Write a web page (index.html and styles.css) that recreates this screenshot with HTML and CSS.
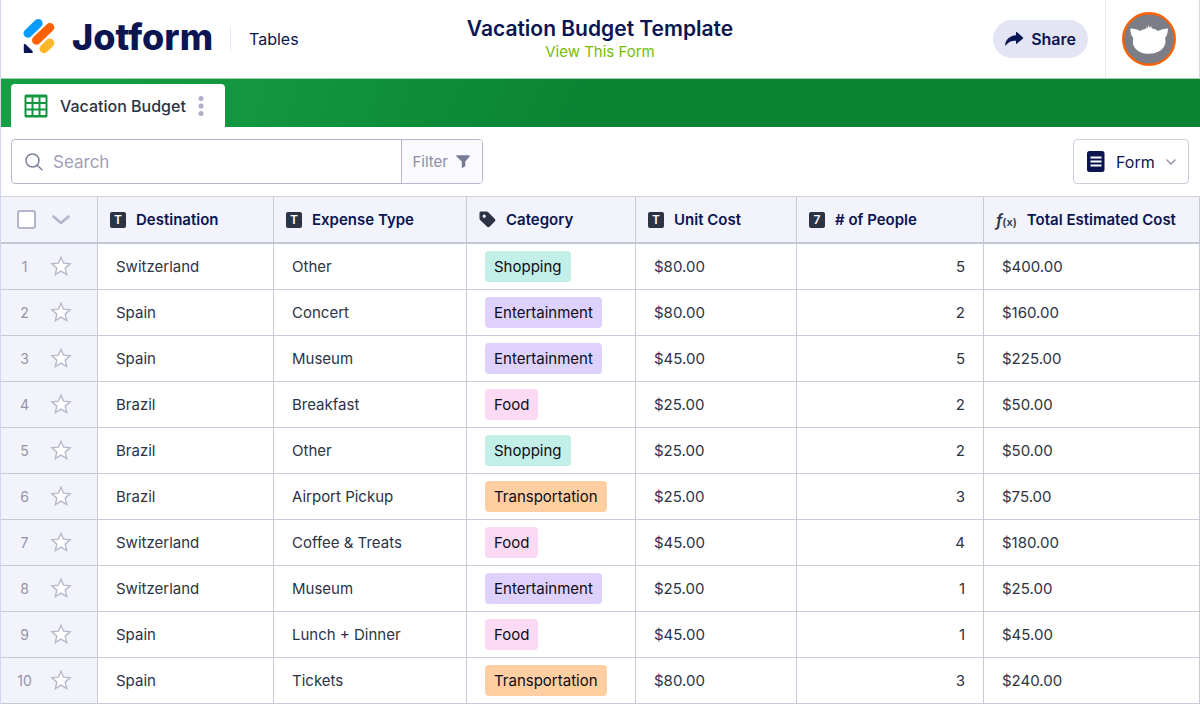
FILE: index.html
```html
<!DOCTYPE html>
<html lang="en">
<head>
    <meta charset="UTF-8">
    <meta name="viewport" content="width=device-width, initial-scale=1.0">
    <title>Vacation Budget Template | Jotform Tables</title>
    <link rel="stylesheet" href="styles.css">
</head>
<body>
<svg class="sprite" aria-hidden="true">
    <symbol id="star" viewBox="0 0 22 22">
        <path d="M11 1.200l2.600 6 6.500.6-4.900 4.300 1.500 6.400L11 15.100l-5.700 3.400 1.500-6.400L1.900 7.800l6.500-.6z" fill="#fff" stroke="#b7b8cb" stroke-width="1.400"/>
    </symbol>
</svg>

<header class="header">
    <div class="brand">
        <a class="logo" href="#">
            <svg width="32" height="36" viewBox="0 0 32 36" aria-hidden="true">
                <g fill="none" stroke-width="8.8" stroke-linecap="round">
                    <path d="M4.900 14.300L15.200 4.400" stroke="#0a9bff"/>
                    <path d="M13.400 21.300L26.900 8.400" stroke="#ff6100"/>
                    <path d="M20.900 29.800L26.900 24" stroke="#ffb629"/>
                </g>
                <path d="M.8 26c0-1 1-1.400 1.700-.7l7 6.800c.8.8.3 1.900-.7 1.900H1.800c-.6 0-1-.4-1-1z" fill="#0a1551"/>
            </svg>
            <span class="logo-text">Jotform</span>
        </a>
        <a class="product" href="#">Tables</a>
    </div>
    <div class="title">
        <h1>Vacation Budget Template</h1>
        <a href="#">View This Form</a>
    </div>
    <div class="account">
        <button class="share" type="button">
            <svg width="19" height="14" viewBox="0 0 19 14" aria-hidden="true">
                <path d="M11 .4c0-.4.500-.6.800-.3l6.200 5.400c.3.300.3.700 0 1l-6.200 5.300c-.3.300-.8.100-.8-.3V8.700C6.800 8.500 3.500 9.600.9 13.200.4 13.700 0 13.400.1 12.700.8 7.800 4.500 3.800 11 3.300z" fill="#0a1551"/>
            </svg>
            Share
        </button>
        <button class="avatar" type="button" aria-label="Account">
            <svg width="54" height="54" viewBox="0 0 54 54" aria-hidden="true">
                <circle cx="27" cy="27" r="25.800" fill="#7b7d87" stroke="#ff6100" stroke-width="2.400"/>
                <path d="M8.300 16.600c4 .2 7.200.9 10 2.300 1.800-1.300 4-2 6-2.200l-.2-2.200 1.800 1.700.7-3.200 1.300 2.800 1.700-1.600.1 2.300c2.400.3 4.500 1.100 6.300 2.400 2.800-1.400 6-2.200 10-2.400-.1 4.300-1.200 7.500-3 9.600 2.600 8.900-5.200 15.700-16 15.700S8.900 35 11.300 26.200c-1.800-2.100-2.900-5.300-3-9.600z" fill="#fff"/>
            </svg>
        </button>
    </div>
</header>

<nav class="tabs">
    <div class="tab">
        <svg width="24" height="24" viewBox="0 0 24 24" aria-hidden="true">
            <rect x=".5" y=".5" width="23" height="23" rx="1.500" fill="#12963f"/>
            <path d="M2.500 3.500h5v4.500h-5zM9.500 3.500h5v4.500h-5zM16.500 3.500h5v4.500h-5zM2.500 10h5v4.500h-5zM9.500 10h5v4.500h-5zM16.500 10h5v4.500h-5zM2.500 16.500h5V21h-5zM9.500 16.500h5V21h-5zM16.500 16.500h5V21h-5z" fill="#fff"/>
        </svg>
        <a href="#">Vacation Budget</a>
        <button type="button" aria-label="Tab menu">
            <svg width="6" height="20" viewBox="0 0 6 20" aria-hidden="true">
                <g fill="#adb0c6">
                    <circle cx="3" cy="2.500" r="2.500"/>
                    <circle cx="3" cy="10" r="2.500"/>
                    <circle cx="3" cy="17.500" r="2.500"/>
                </g>
            </svg>
        </button>
    </div>
</nav>

<div class="toolbar">
    <div class="search">
        <label for="search" aria-label="Search">
            <svg width="18" height="18" viewBox="0 0 18 18" aria-hidden="true">
                <g fill="none" stroke="#7e819c" stroke-width="1.500" stroke-linecap="round">
                    <circle cx="7.500" cy="7.500" r="6.500"/>
                    <path d="M12.200 12.200l4.800 4.600"/>
                </g>
            </svg>
        </label>
        <input type="text" id="search" placeholder="Search">
        <button class="filter" type="button">
            Filter
            <svg width="14" height="13" viewBox="0 0 14 13" aria-hidden="true">
                <path d="M1 .3h12c.8 0 1 .8.600 1.300L9.300 6.500v4.200c0 .4-.2.700-.5.900l-2 1.200c-.5.300-1 0-1-.6V6.500L.4 1.600C0 1.100.2.300 1 .3z" fill="#787b99"/>
            </svg>
        </button>
    </div>
    <label class="source">
        <svg width="18" height="21" viewBox="0 0 18 21" aria-hidden="true">
            <rect width="17.500" height="21" rx="2.500" fill="#0a1551"/>
            <path d="M3.500 6.500h11M3.500 10.500h11M3.500 14.500h11" stroke="#fff" stroke-width="1.800"/>
        </svg>
        <select aria-label="Source">
            <option>Form</option>
        </select>
        <svg width="10" height="6" viewBox="0 0 10 6" aria-hidden="true">
            <path d="M1 1l4 4 4-4" fill="none" stroke="#9799b4" stroke-width="1.600" stroke-linecap="round"/>
        </svg>
    </label>
</div>

<table class="grid">
    <colgroup>
        <col class="col-row">
        <col class="col-destination">
        <col class="col-expense">
        <col class="col-category">
        <col class="col-unit">
        <col class="col-people">
        <col>
    </colgroup>
    <thead>
        <tr>
            <th>
                <div class="select-all">
                    <input type="checkbox" aria-label="Select all rows">
                    <button type="button" aria-label="Selection menu">
                        <svg width="18" height="10" viewBox="0 0 18 10" aria-hidden="true">
                            <path d="M1.500 1.500L9 8l7.500-6.500" fill="none" stroke="#b4b4cb" stroke-width="2.600" stroke-linecap="round" stroke-linejoin="round"/>
                        </svg>
                    </button>
                </div>
            </th>
            <th><div class="head"><span class="type">T</span>Destination</div></th>
            <th><div class="head"><span class="type">T</span>Expense Type</div></th>
            <th>
                <div class="head">
                    <svg width="17" height="17" viewBox="0 0 17 17" aria-hidden="true">
                        <path d="M2 .5h5.500c.6 0 1.100.2 1.500.6l6.700 6.600c.9.900.9 2 0 2.800l-4.900 5c-.9.900-2 .9-2.900 0L1.100 9C.7 8.600.5 8.100.5 7.500V2C.5 1.100 1.100.5 2 .5zm3.200 3.100a1.600 1.600 0 1 0 0 3.200 1.600 1.600 0 0 0 0-3.200z" fill="#2c3345"/>
                    </svg>
                    Category
                </div>
            </th>
            <th><div class="head"><span class="type">T</span>Unit Cost</div></th>
            <th><div class="head"><span class="type">7</span># of People</div></th>
            <th><div class="head"><span class="formula"><i>f</i>(x)</span>Total Estimated Cost</div></th>
        </tr>
    </thead>
    <tbody>
        <tr>
            <td><div class="row-tools"><span>1</span><button type="button" aria-label="Star row 1"><svg><use href="#star"/></svg></button></div></td>
            <td>Switzerland</td>
            <td>Other</td>
            <td><span class="tag shopping">Shopping</span></td>
            <td>$80.00</td>
            <td>5</td>
            <td>$400.00</td>
        </tr>
        <tr>
            <td><div class="row-tools"><span>2</span><button type="button" aria-label="Star row 2"><svg><use href="#star"/></svg></button></div></td>
            <td>Spain</td>
            <td>Concert</td>
            <td><span class="tag entertainment">Entertainment</span></td>
            <td>$80.00</td>
            <td>2</td>
            <td>$160.00</td>
        </tr>
        <tr>
            <td><div class="row-tools"><span>3</span><button type="button" aria-label="Star row 3"><svg><use href="#star"/></svg></button></div></td>
            <td>Spain</td>
            <td>Museum</td>
            <td><span class="tag entertainment">Entertainment</span></td>
            <td>$45.00</td>
            <td>5</td>
            <td>$225.00</td>
        </tr>
        <tr>
            <td><div class="row-tools"><span>4</span><button type="button" aria-label="Star row 4"><svg><use href="#star"/></svg></button></div></td>
            <td>Brazil</td>
            <td>Breakfast</td>
            <td><span class="tag food">Food</span></td>
            <td>$25.00</td>
            <td>2</td>
            <td>$50.00</td>
        </tr>
        <tr>
            <td><div class="row-tools"><span>5</span><button type="button" aria-label="Star row 5"><svg><use href="#star"/></svg></button></div></td>
            <td>Brazil</td>
            <td>Other</td>
            <td><span class="tag shopping">Shopping</span></td>
            <td>$25.00</td>
            <td>2</td>
            <td>$50.00</td>
        </tr>
        <tr>
            <td><div class="row-tools"><span>6</span><button type="button" aria-label="Star row 6"><svg><use href="#star"/></svg></button></div></td>
            <td>Brazil</td>
            <td>Airport Pickup</td>
            <td><span class="tag transportation">Transportation</span></td>
            <td>$25.00</td>
            <td>3</td>
            <td>$75.00</td>
        </tr>
        <tr>
            <td><div class="row-tools"><span>7</span><button type="button" aria-label="Star row 7"><svg><use href="#star"/></svg></button></div></td>
            <td>Switzerland</td>
            <td>Coffee &amp; Treats</td>
            <td><span class="tag food">Food</span></td>
            <td>$45.00</td>
            <td>4</td>
            <td>$180.00</td>
        </tr>
        <tr>
            <td><div class="row-tools"><span>8</span><button type="button" aria-label="Star row 8"><svg><use href="#star"/></svg></button></div></td>
            <td>Switzerland</td>
            <td>Museum</td>
            <td><span class="tag entertainment">Entertainment</span></td>
            <td>$25.00</td>
            <td>1</td>
            <td>$25.00</td>
        </tr>
        <tr>
            <td><div class="row-tools"><span>9</span><button type="button" aria-label="Star row 9"><svg><use href="#star"/></svg></button></div></td>
            <td>Spain</td>
            <td>Lunch + Dinner</td>
            <td><span class="tag food">Food</span></td>
            <td>$45.00</td>
            <td>1</td>
            <td>$45.00</td>
        </tr>
        <tr>
            <td><div class="row-tools"><span>10</span><button type="button" aria-label="Star row 10"><svg><use href="#star"/></svg></button></div></td>
            <td>Spain</td>
            <td>Tickets</td>
            <td><span class="tag transportation">Transportation</span></td>
            <td>$80.00</td>
            <td>3</td>
            <td>$240.00</td>
        </tr>
    </tbody>
</table>
</body>
</html>
```

FILE: styles.css
```css
* {
    box-sizing: border-box;
}

body {
    margin: 0;
    border-left: 1px solid #d3d4ee;
    font-family: Inter, "Liberation Sans", sans-serif;
    font-size: 15px;
    color: #2c3345;
    background-color: #fff;
}

a {
    color: inherit;
    text-decoration: none;
}

svg {
    display: block;
    flex: none;
}

button, input, select {
    font: inherit;
    color: inherit;
    margin: 0;
    padding: 0;
    border: none;
    background: none;
}

button {
    cursor: pointer;
}

.sprite {
    position: absolute;
    width: 0;
    height: 0;
}

/* header */

.header {
    display: grid;
    grid-template-columns: 1fr auto 1fr;
    height: 79px;
    border-bottom: 1px solid #a5cdb2;
    border-right: 1px solid #d3d4ee;
    color: #0a1551;
}

.brand {
    display: flex;
    align-items: center;
    gap: 17px;
    padding-left: 22px;
}

.logo {
    display: flex;
    align-items: center;
    gap: 17px;
    padding-bottom: 4px;
}

.logo-text {
    font-size: 36px;
    line-height: 40px;
    font-weight: 800;
}

.product {
    padding-left: 18px;
    border-left: 1px solid #e3e5f5;
    font-size: 16px;
    line-height: 24px;
}

.title {
    display: flex;
    flex-direction: column;
    align-items: center;
    padding-top: 16px;
}

.title h1 {
    margin: 0;
    font-size: 21px;
    line-height: 26px;
    font-weight: 600;
}

.title a {
    font-size: 15px;
    line-height: 20px;
    color: #78bb07;
}

.account {
    display: flex;
    justify-content: flex-end;
    align-items: center;
    gap: 17px;
}

.share {
    display: flex;
    align-items: center;
    gap: 7px;
    height: 38px;
    padding: 0 12px;
    border-radius: 19px;
    background-color: #e3e5f5;
    font-size: 16px;
    font-weight: 600;
}

.avatar {
    display: flex;
    align-items: center;
    height: 100%;
    padding: 0 23px 0 16px;
    border-left: 1px solid #e9e9ee;
}

/* tabs */

.tabs {
    display: flex;
    height: 48px;
    margin-left: -1px;
    padding: 5px 11px 0;
    background: linear-gradient(110deg, #179f44 0%, #12963f 22%, #0a8333 50%, #0a8333 100%);
}

.tab {
    display: flex;
    align-items: center;
    gap: 12px;
    padding: 0 21px 0 13px;
    border-radius: 4px 4px 0 0;
    background-color: #fff;
    font-size: 16px;
    font-weight: 500;
}

/* toolbar */

.toolbar {
    display: flex;
    justify-content: space-between;
    padding: 12px 11px 12px 10px;
}

.search {
    display: flex;
    width: 42%;
    max-width: 472px;
    height: 45px;
    border: 1px solid #b7b8cd;
    border-radius: 4px;
    color: #787b99;
}

.search label {
    display: flex;
    align-items: center;
    padding: 0 10px 0 13px;
}

.search input {
    flex: 1;
    min-width: 0;
    font-size: 17px;
    outline: none;
}

.search input::placeholder {
    color: #9fa1b8;
    opacity: 1;
}

.filter {
    display: flex;
    align-items: center;
    gap: 8px;
    padding: 0 12px 0 11px;
    border-left: 1px solid #b7b8cd;
    border-radius: 0 3px 3px 0;
    background-color: #fafafe;
    color: #8c8ea7;
}

.source {
    display: flex;
    align-items: center;
    gap: 11px;
    height: 45px;
    padding: 0 12px 0 13px;
    border: 1px solid #c8ceda;
    border-radius: 4px;
    color: #0a1551;
    font-size: 16px;
}

.source select {
    appearance: none;
}

/* table */

.grid {
    width: 100%;
    table-layout: fixed;
    border-collapse: separate;
    border-spacing: 0;
}

.col-row {
    width: 97px;
}

.col-destination {
    width: 176px;
}

.col-expense {
    width: 193px;
}

.col-category {
    width: 169px;
}

.col-unit {
    width: 161px;
}

.col-people {
    width: 187px;
}

.grid th {
    height: 48px;
    padding: 0 12px;
    border-top: 1px solid #d0d4e2;
    border-right: 1px solid #c6cada;
    border-bottom: 2px solid #c3c8d9;
    background-color: #f3f3fc;
    color: #0a1551;
    font-weight: 600;
    text-align: left;
}

.grid td {
    height: 46px;
    padding: 0 18px;
    border-right: 1px solid #c6cada;
    border-bottom: 1px solid #c6cada;
}

.grid td:first-child {
    padding: 0 12px;
    background-color: #f3f3fc;
}

.grid td:nth-child(6) {
    text-align: right;
}

.head {
    display: flex;
    align-items: center;
    gap: 10px;
    white-space: nowrap;
}

.type {
    width: 16px;
    height: 16px;
    border-radius: 2px;
    background-color: #2c3345;
    color: #fff;
    font-size: 12px;
    line-height: 16px;
    text-align: center;
}

.formula {
    color: #2c3345;
    font-size: 11px;
}

.formula i {
    font-size: 16px;
}

.select-all {
    display: flex;
    align-items: center;
    gap: 16px;
    padding-left: 4px;
}

.select-all input {
    appearance: none;
    width: 19px;
    height: 19px;
    border: 2px solid #b4b4cb;
    border-radius: 3px;
    background-color: #fff;
}

.row-tools {
    display: flex;
    align-items: center;
    gap: 14px;
    color: #9395a9;
    font-size: 14px;
}

.row-tools span {
    width: 23px;
    text-align: center;
}

.row-tools svg {
    width: 22px;
    height: 22px;
}

.tag {
    display: inline-block;
    padding: 0 9px;
    border-radius: 4px;
    color: #0b0d17;
    line-height: 31px;
}

.shopping {
    background-color: #c3efe9;
}

.entertainment {
    background-color: #dfd1fd;
}

.food {
    background-color: #fcdaf3;
}

.transportation {
    background-color: #ffcfa2;
}
```
